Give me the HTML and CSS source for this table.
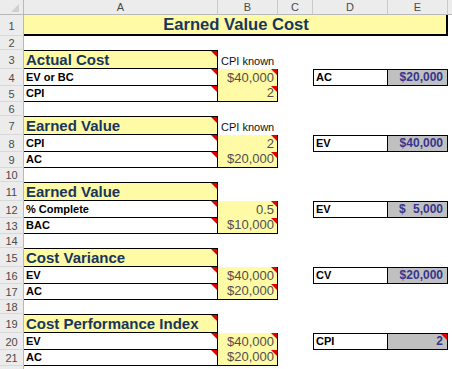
FILE: index.html
```html
<!DOCTYPE html>
<html>
<head>
<meta charset="utf-8">
<link rel="stylesheet" href="styles.css">
</head>
<body>
<div class="sheet">
  <div class="row hdr">
    <div class="corner"><span class="sel"></span></div>
    <div class="ch">A</div>
    <div class="ch">B</div>
    <div class="ch">C</div>
    <div class="ch">D</div>
    <div class="ch">E</div>
    <div class="ch last"></div>
  </div>

  <div class="row h-r1">
    <div class="rh">1</div>
    <div class="title">Earned Value Cost</div>
    <div class="c"></div>
  </div>

  <div class="row h-blank"><div class="rh">2</div></div>

  <div class="row h-title">
    <div class="rh">3</div>
    <div class="c sec cm">Actual Cost</div>
    <div class="c note">CPI known</div>
  </div>
  <div class="row h-d1">
    <div class="rh">4</div>
    <div class="c lbl cm">EV or BC</div>
    <div class="c inp cm">$40,000</div>
    <div class="c"></div>
    <div class="c dl">AC</div>
    <div class="c out">$20,000</div>
  </div>
  <div class="row h-d2">
    <div class="rh">5</div>
    <div class="c lbl cm">CPI</div>
    <div class="c inp inp-end cm">2</div>
  </div>

  <div class="row h-blank"><div class="rh">6</div></div>

  <div class="row h-title">
    <div class="rh">7</div>
    <div class="c sec cm">Earned Value</div>
    <div class="c note">CPI known</div>
  </div>
  <div class="row h-d1">
    <div class="rh">8</div>
    <div class="c lbl cm">CPI</div>
    <div class="c inp cm">2</div>
    <div class="c"></div>
    <div class="c dl">EV</div>
    <div class="c out">$40,000</div>
  </div>
  <div class="row h-d2">
    <div class="rh">9</div>
    <div class="c lbl cm">AC</div>
    <div class="c inp inp-end cm">$20,000</div>
  </div>

  <div class="row h-blank"><div class="rh">10</div></div>

  <div class="row h-title">
    <div class="rh">11</div>
    <div class="c sec cm">Earned Value</div>
  </div>
  <div class="row h-d1">
    <div class="rh">12</div>
    <div class="c lbl cm">% Complete</div>
    <div class="c inp cm">0.5</div>
    <div class="c"></div>
    <div class="c dl">EV</div>
    <div class="c out out-split"><span>$</span><span>5,000</span></div>
  </div>
  <div class="row h-d2">
    <div class="rh">13</div>
    <div class="c lbl cm">BAC</div>
    <div class="c inp inp-end cm">$10,000</div>
  </div>

  <div class="row h-blank"><div class="rh">14</div></div>

  <div class="row h-title">
    <div class="rh">15</div>
    <div class="c sec cm">Cost Variance</div>
  </div>
  <div class="row h-d1">
    <div class="rh">16</div>
    <div class="c lbl cm">EV</div>
    <div class="c inp cm">$40,000</div>
    <div class="c"></div>
    <div class="c dl">CV</div>
    <div class="c out">$20,000</div>
  </div>
  <div class="row h-d2">
    <div class="rh">17</div>
    <div class="c lbl cm">AC</div>
    <div class="c inp inp-end cm">$20,000</div>
  </div>

  <div class="row h-blank"><div class="rh">18</div></div>

  <div class="row h-title">
    <div class="rh">19</div>
    <div class="c sec cm">Cost Performance Index</div>
  </div>
  <div class="row h-d1">
    <div class="rh">20</div>
    <div class="c lbl cm">EV</div>
    <div class="c inp cm">$40,000</div>
    <div class="c"></div>
    <div class="c dl">CPI</div>
    <div class="c out cm">2</div>
  </div>
  <div class="row h-d2">
    <div class="rh">21</div>
    <div class="c lbl cm">AC</div>
    <div class="c inp inp-end cm">$20,000</div>
  </div>
  <div class="row h-blank"><div class="rh"></div></div>
</div>
</body>
</html>
```

FILE: styles.css
```css
html, body {
  margin: 0;
  padding: 0;
  background: #ffffff;
}
body {
  width: 452px;
  height: 369px;
  overflow: hidden;
  font-family: "Liberation Sans", Arial, sans-serif;
}
.sheet {
  width: 452px;
}
.row {
  display: grid;
  grid-template-columns: 24px 194px 60px 35px 75px 60px 4px;
  box-sizing: border-box;
}
.hdr { height: 15px; }
.h-r1 { height: 21px; }
.h-blank { height: 14px; }
.h-title { height: 19px; }
.h-d1 { height: 17px; }
.h-d2 { height: 16px; }

.corner {
  position: relative;
  background: #ececec;
  border-right: 1px solid #b8b8b8;
  border-bottom: 1px solid #b8b8b8;
  box-sizing: border-box;
}
.sel {
  position: absolute;
  right: 4px;
  bottom: 2px;
  width: 0;
  height: 0;
  border-style: solid;
  border-width: 0 0 8px 8px;
  border-color: transparent transparent #d0d0d0 transparent;
}
.ch {
  background: #ececec;
  border-right: 1px solid #c9c9c9;
  border-bottom: 1px solid #b8b8b8;
  box-sizing: border-box;
  display: flex;
  align-items: center;
  justify-content: center;
  font-size: 11px;
  color: #4a4a4a;
  line-height: 14px;
}
.ch.last { border-right: none; }

.rh {
  grid-column: 1;
  background: #ececec;
  border-right: 1px solid #b8b8b8;
  border-bottom: 1px solid #d8d8d8;
  box-sizing: border-box;
  display: flex;
  align-items: center;
  justify-content: center;
  font-size: 11px;
  color: #4a4a4a;
  padding-top: 1px;
}

.c {
  position: relative;
  box-sizing: border-box;
  display: flex;
  align-items: flex-end;
  padding: 0 2px 1px 2px;
  white-space: nowrap;
  min-width: 0;
}

.title {
  grid-column: 2 / 7;
  background: #fffaa6;
  border-right: 2px solid #000;
  border-bottom: 2px solid #000;
  box-sizing: border-box;
  display: flex;
  align-items: flex-end;
  justify-content: center;
  font-weight: bold;
  font-size: 16.6px;
  line-height: 19px;
  color: #17365d;
  padding-left: 2px;
}

.sec {
  background: #fffaa6;
  border-top: 1px solid #000;
  border-bottom: 1px solid #000;
  border-right: 1px solid #000;
  font-weight: bold;
  font-size: 15px;
  line-height: 17px;
  color: #17365d;
  padding-bottom: 0;
}
.lbl {
  background: #ffffff;
  border-bottom: 1px solid #000;
  border-right: 1px solid #000;
  font-weight: bold;
  font-size: 11px;
  line-height: 13px;
  color: #000;
}
.note {
  font-size: 11px;
  line-height: 13px;
  color: #111;
  overflow: visible;
  padding-left: 3px;
}
.inp {
  background: #fffaa6;
  border-right: 1px solid #000;
  justify-content: flex-end;
  font-size: 13px;
  line-height: 14px;
  color: #4f4f4f;
  padding-right: 3px;
}
.inp-end {
  border-bottom: 1px solid #000;
}
.dl {
  background: #ffffff;
  border: 1px solid #000;
  font-weight: bold;
  font-size: 11px;
  line-height: 13px;
  color: #000;
  padding-left: 2px;
}
.out {
  background: #c0c0c0;
  border-top: 1px solid #000;
  border-bottom: 1px solid #000;
  border-right: 1px solid #000;
  justify-content: flex-end;
  font-weight: bold;
  font-size: 12px;
  line-height: 14px;
  color: #35358f;
  padding-right: 4px;
}
.out-split {
  justify-content: space-between;
  padding-left: 11px;
}

.cm::after {
  content: "";
  position: absolute;
  top: 0;
  right: 0;
  width: 0;
  height: 0;
  border-style: solid;
  border-width: 0 6px 6px 0;
  border-color: transparent #e00000 transparent transparent;
}
```
